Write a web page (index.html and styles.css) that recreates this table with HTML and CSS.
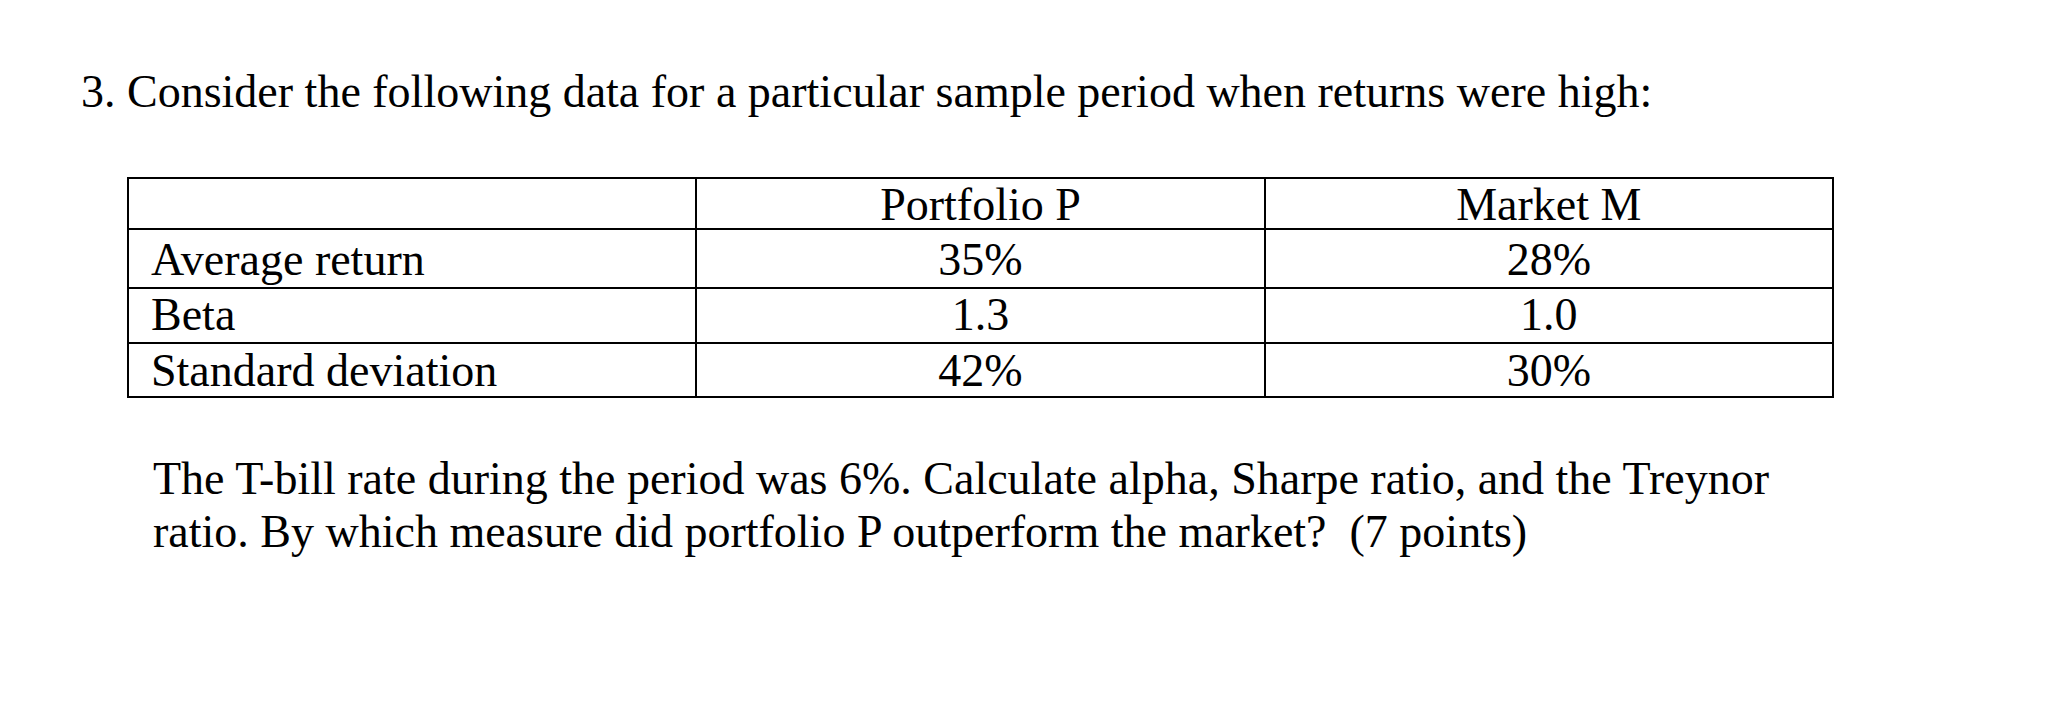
FILE: index.html
```html
<!DOCTYPE html>
<html>
<head>
<meta charset="utf-8">
<link rel="stylesheet" href="styles.css">
</head>
<body>
<div class="page">
  <p class="question">3. Consider the following data for a particular sample period when returns were high:</p>
  <table class="data">
    <tr class="head">
      <td></td>
      <td class="num">Portfolio P</td>
      <td class="num">Market M</td>
    </tr>
    <tr class="r1">
      <td>Average return</td>
      <td class="num">35%</td>
      <td class="num">28%</td>
    </tr>
    <tr class="r2">
      <td>Beta</td>
      <td class="num">1.3</td>
      <td class="num">1.0</td>
    </tr>
    <tr class="r3">
      <td>Standard deviation</td>
      <td class="num">42%</td>
      <td class="num">30%</td>
    </tr>
  </table>
  <p class="task">The T-bill rate during the period was 6%. Calculate alpha, Sharpe ratio, and the Treynor<br>ratio. By which measure did portfolio P outperform the market?&nbsp; (7 points)</p>
</div>
</body>
</html>
```
FILE: styles.css
```css
html, body {
  margin: 0;
  padding: 0;
  background: #ffffff;
}
body {
  width: 2046px;
  height: 712px;
  overflow: hidden;
  font-family: "Liberation Serif", "Times New Roman", serif;
  color: #000;
}
.page {
  padding: 69px 0 0 81px;
}
.question {
  margin: 0;
  font-size: 46px;
  line-height: 46px;
}
.data {
  margin: 62px 0 0 46px;
  border-collapse: collapse;
  width: 1707px;
  table-layout: fixed;
  font-size: 46px;
}
.data td {
  border: 2px solid #000;
  padding: 0 0 0 22px;
  vertical-align: bottom;
  line-height: 47px;
  white-space: nowrap;
}
.data td.num {
  text-align: center;
  padding-left: 0;
}
.head td { height: 49px; padding-bottom: 0; }
.r1 td { height: 53px; padding-bottom: 4px; }
.r2 td { height: 49px; padding-bottom: 4px; }
.r3 td { height: 50px; padding-bottom: 2px; }
.task {
  margin: 54px 0 0 72px;
  font-size: 46px;
  line-height: 53px;
}
```
